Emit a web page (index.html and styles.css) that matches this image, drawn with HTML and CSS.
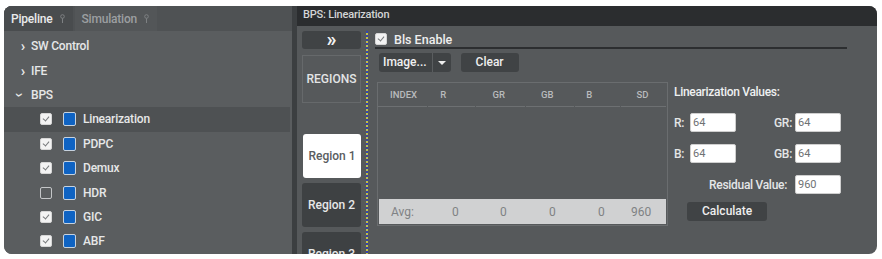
FILE: index.html
```html
<!DOCTYPE html>
<html lang="en">
  <head>
    <meta charset="UTF-8" />
    <title>BPS Linearization</title>
    <link rel="stylesheet" href="styles.css">
  </head>
  <body>
    <div class="window">
      <!-- Pipeline tree -->
      <div class="left">
        <div class="tabs">
          <div class="tab active">Pipeline
            <svg class="pin" width="5" height="9" viewBox="0 0 5 9"><circle cx="2.5" cy="2.5" r="1.8" fill="none" stroke="currentColor" stroke-width="1"/><line x1="2.5" y1="4.3" x2="2.5" y2="9" stroke="currentColor" stroke-width="1"/></svg>
          </div>
          <div class="tab">Simulation
            <svg class="pin" width="5" height="9" viewBox="0 0 5 9"><circle cx="2.5" cy="2.5" r="1.8" fill="none" stroke="currentColor" stroke-width="1"/><line x1="2.5" y1="4.3" x2="2.5" y2="9" stroke="currentColor" stroke-width="1"/></svg>
          </div>
        </div>
        <div class="tree">
          <div class="node"><span class="arrow">&#x203A;</span>SW Control</div>
          <div class="node"><span class="arrow">&#x203A;</span>IFE</div>
          <div class="node"><span class="arrow down">&#x203A;</span>BPS</div>
          <div class="leaf selected"><span class="check on"></span><span class="swatch"></span>Linearization</div>
          <div class="leaf"><span class="check on"></span><span class="swatch"></span>PDPC</div>
          <div class="leaf"><span class="check on"></span><span class="swatch"></span>Demux</div>
          <div class="leaf"><span class="check"></span><span class="swatch"></span>HDR</div>
          <div class="leaf"><span class="check on"></span><span class="swatch"></span>GIC</div>
          <div class="leaf"><span class="check on"></span><span class="swatch"></span>ABF</div>
        </div>
      </div>

      <div class="splitter"></div>

      <!-- Module panel -->
      <div class="right">
        <div class="header">BPS: Linearization</div>
        <div class="body">
          <div class="regions">
            <div class="expand">&#x00BB;</div>
            <div class="regions-label">REGIONS</div>
            <div class="region current">Region 1</div>
            <div class="region">Region 2</div>
            <div class="region">Region 3</div>
          </div>
          <div class="dots"></div>
          <div class="content">
            <div class="enable"><span class="check on"></span>Bls Enable</div>
            <div class="toolbar">
              <div class="combo"><span class="combo-text">Image...</span><span class="combo-arrow"></span></div>
              <div class="btn">Clear</div>
            </div>
            <div class="main">
              <div class="table">
                <div class="thead">
                  <span class="c1">INDEX</span><span class="c2">R</span><span class="c3">GR</span><span class="c4">GB</span><span class="c5">B</span><span class="c6">SD</span>
                </div>
                <div class="tbody"></div>
                <div class="avg">
                  <span class="c1">Avg:</span><span class="c2">0</span><span class="c3">0</span><span class="c4">0</span><span class="c5">0</span><span class="c6">960</span>
                </div>
              </div>
              <div class="values">
                <div class="values-title">Linearization Values:</div>
                <div class="grid">
                  <label>R:</label><input value="64" />
                  <label class="right-label">GR:</label><input value="64" />
                  <label>B:</label><input value="64" />
                  <label class="right-label">GB:</label><input value="64" />
                </div>
                <div class="residual"><label>Residual Value:</label><input value="960" /></div>
                <div class="calc btn">Calculate</div>
              </div>
            </div>
          </div>
        </div>
      </div>
    </div>
  </body>
</html>
```

FILE: styles.css
```css
body {
  margin: 0;
  background-color: #ffffff;
  font-family: Roboto, "Liberation Sans", sans-serif;
  font-size: 12px;
  color: #e6e7e8;
}

.window {
  display: flex;
  margin: 6px 5px 0 4px;
  height: 248px;
  border-radius: 8px;
  overflow: hidden;
  background-color: #56595b;
}

/* left tree */
.left {
  flex: none;
  width: 288px;
  display: flex;
  flex-direction: column;
  background-color: #5a5d5f;
}

.tabs {
  display: flex;
  height: 25px;
  background-color: #4f5254;
}

.tab {
  display: flex;
  align-items: center;
  padding: 0 8px 0 7px;
  color: #9c9fa1;
  background-color: #535658;
  font-weight: 500;
  letter-spacing: -0.2px;
}

.tab.active {
  background-color: #494c4e;
  color: #e9eaeb;
  margin-right: 2px;
}

.pin {
  margin-left: 7px;
  color: #7e8183;
}

.tree {
  padding-top: 3px;
}

.node,
.leaf {
  height: 24.4px;
  display: flex;
  align-items: center;
  font-weight: 500;
  letter-spacing: -0.2px;
}

.node {
  padding-left: 11px;
}

.arrow {
  display: inline-block;
  width: 16px;
  font-size: 15px;
  font-weight: 700;
  line-height: 12px;
  text-align: center;
}

.arrow.down {
  transform: rotate(90deg);
  width: 10px;
  margin-right: 6px;
}

.leaf {
  padding-left: 36px;
}

.leaf.selected {
  background-color: #4e5153;
  margin-right: 2px;
}

.check {
  width: 10px;
  height: 10px;
  border-radius: 2px;
  background-color: #f3f3f3;
  border: 1px solid #d6d6d6;
  position: relative;
  margin-right: 11px;
}

.check.on::after {
  content: "";
  position: absolute;
  left: 3px;
  top: 1px;
  width: 3px;
  height: 5px;
  border: solid #777a7c;
  border-width: 0 1.5px 1.5px 0;
  transform: rotate(40deg);
}

.leaf .check:not(.on) {
  background-color: transparent;
  border-color: #c4c6c8;
}

.swatch {
  width: 11px;
  height: 12px;
  background-color: #0f63c3;
  border: 1.5px solid #c7d2de;
  border-radius: 2px;
  margin-right: 7px;
}

.splitter {
  flex: none;
  width: 5px;
  background-color: #3c3f41;
}

/* right panel */
.right {
  flex: 1;
  display: flex;
  flex-direction: column;
  min-width: 0;
}

.header {
  height: 20px;
  line-height: 18px;
  background-color: #2b2d2f;
  color: #d4d5d6;
  font-size: 11px;
  font-weight: 500;
  padding-left: 6px;
  letter-spacing: -0.2px;
}

.body {
  flex: 1;
  display: flex;
  min-height: 0;
}

.regions {
  flex: none;
  width: 59px;
  padding: 5px 4px 0 5px;
  display: flex;
  flex-direction: column;
  gap: 5px;
  overflow: hidden;
}

.expand {
  flex: none;
  height: 18px;
  line-height: 16px;
  text-align: center;
  background-color: #404345;
  border-radius: 3px;
  font-size: 20px;
  font-weight: 700;
  color: #f2f2f2;
}

.regions-label {
  flex: none;
  height: 46px;
  line-height: 46px;
  margin-top: 1px;
  border: 1px solid #66696b;
  text-align: center;
  font-weight: 500;
  color: #e3e4e5;
  margin-bottom: 26px;
}

.region {
  flex: none;
  height: 44px;
  line-height: 44px;
  text-align: center;
  background-color: #3e4143;
  border-radius: 3px;
  color: #e6e7e8;
  font-weight: 500;
}

.region.current {
  background-color: #ffffff;
  color: #5a5d5f;
  margin-left: 1px;
}

.dots {
  flex: none;
  width: 2px;
  margin: 5px 4px 0 1px;
  background-image: linear-gradient(#2f3fb8 50%, #c6c23c 50%);
  background-size: 2px 4px;
}

.content {
  flex: 1;
  padding: 7px 30px 0 3px;
}

.enable {
  display: flex;
  align-items: center;
  height: 12px;
  font-size: 12.5px;
  font-weight: 500;
  color: #eeeeee;
}

.enable .check {
  margin-right: 7px;
}

.toolbar {
  display: flex;
  gap: 10px;
  border-top: 2px solid #2c2e30;
  margin-top: 2px;
  padding: 4px 0 0 4px;
}

.combo {
  display: flex;
  height: 19px;
  background-color: #404345;
  border-radius: 3px;
}

.combo-text {
  line-height: 19px;
  padding: 0 5px 0 4px;
  font-weight: 500;
  border-right: 1px solid #5a5d5f;
  color: #f0f0f0;
}

.combo-arrow {
  width: 18px;
  position: relative;
}

.combo-arrow::after {
  content: "";
  position: absolute;
  left: 5px;
  top: 8px;
  border-left: 4px solid transparent;
  border-right: 4px solid transparent;
  border-top: 4px solid #eeeeee;
}

.btn {
  height: 19px;
  line-height: 19px;
  padding: 0 15px;
  background-color: #404345;
  border-radius: 3px;
  font-weight: 500;
  color: #eeeeee;
  text-align: center;
}

.main {
  display: flex;
  margin-top: 10px;
  padding-left: 2px;
}

.table {
  width: 289px;
  height: 142px;
  border: 1px solid #6a6d6f;
  display: flex;
  flex-direction: column;
}

.thead,
.avg {
  display: flex;
  align-items: center;
}

.thead {
  height: 24px;
  color: #b9bbbd;
  font-size: 9.5px;
  font-weight: 500;
}

.thead span {
  height: 24px;
  line-height: 24px;
  border-bottom: 1px solid #6d7072;
  margin-right: 1px;
}

.tbody {
  flex: 1;
}

.avg {
  height: 25px;
  margin: 0 1px 1px 1px;
  background-color: #d0d1d2;
  color: #7f8284;
  font-size: 12px;
}

.c1 { width: 50px; padding-left: 12px; box-sizing: border-box; }
.c2 { width: 47px; padding-left: 12px; box-sizing: border-box; }
.c3 { width: 50px; padding-left: 17px; box-sizing: border-box; }
.c4 { width: 49px; padding-left: 15px; box-sizing: border-box; }
.c5 { width: 45px; padding-left: 11px; box-sizing: border-box; }
.c6 { width: 46px; padding-left: 16px; box-sizing: border-box; }

.avg .c1 { padding-left: 12px; }
.avg .c2 { padding-left: 23px; }
.avg .c3 { padding-left: 24px; }
.avg .c4 { padding-left: 23px; }
.avg .c5 { padding-left: 23px; }
.avg .c6 { padding-left: 11px; }

.values {
  padding-left: 6px;
  padding-top: 3px;
  width: 170px;
}

.values-title {
  font-weight: 500;
  color: #eef0f1;
  letter-spacing: -0.3px;
  margin-bottom: 14px;
}

.values label {
  font-weight: 500;
  color: #e4e6e7;
  letter-spacing: -0.3px;
}

.values input {
  width: 46px;
  height: 19px;
  box-sizing: border-box;
  border: 1px solid #cfcfcf;
  border-radius: 2px;
  padding: 0 2px;
  font-family: inherit;
  font-size: 11px;
  color: #6f7274;
  background-color: #ffffff;
}

.grid {
  display: grid;
  grid-template-columns: 16px 46px 59px 46px;
  row-gap: 12px;
  align-items: center;
}

.right-label {
  text-align: right;
  padding-right: 3px;
}

.residual {
  display: flex;
  align-items: center;
  justify-content: flex-end;
  gap: 8px;
  width: 167px;
  margin-top: 12px;
}

.calc {
  width: 50px;
  margin: 8px 0 0 13px;
}
```
